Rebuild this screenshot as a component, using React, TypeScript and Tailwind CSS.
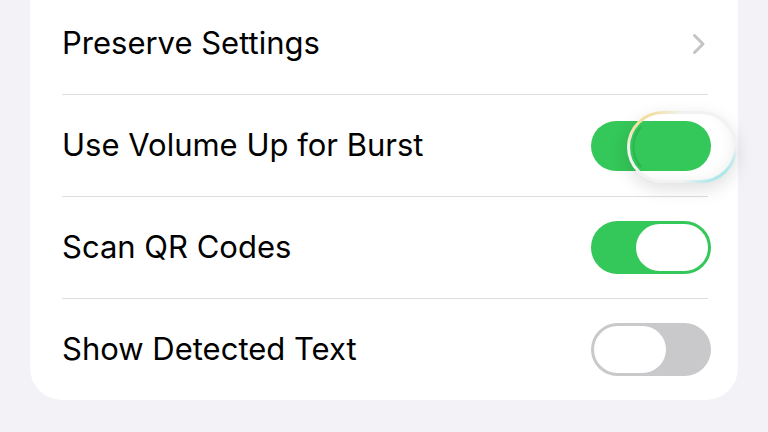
import React from 'react';

function Toggle({ on }: { on: boolean }) {
  return (
    <div
      className={`relative h-[53px] w-[120px] rounded-full ${on ? 'bg-[#34c759]' : 'bg-[#c9c9cc]'}`}
    >
      <div
        className={`absolute top-[3px] h-[47px] w-[72px] rounded-full bg-white ${on ? 'right-[3px]' : 'left-[3px]'}`}
      />
    </div>
  );
}

function GlassToggle() {
  return (
    <div className="relative h-[50px] w-[120px]">
      <div className="absolute inset-0 rounded-full bg-[#34c759]" />
      {/* glass knob mid-drag */}
      <div className="absolute left-[36px] top-[-10px] h-[72px] w-[110px] rounded-full shadow-[0_6px_18px_rgba(0,0,0,0.13),inset_-6px_-4px_12px_rgba(0,0,0,0.05)]">
        <svg className="absolute inset-0" width="110" height="72" viewBox="0 0 110 72">
          <defs>
            <linearGradient id="rim" x1="0" y1="0" x2="1" y2="1">
              <stop offset="0" stopColor="#f0cf5a" />
              <stop offset="0.25" stopColor="#f2f2f2" />
              <stop offset="0.75" stopColor="#f2f2f2" />
              <stop offset="1" stopColor="#6fdfe4" />
            </linearGradient>
          </defs>
          <rect x="1.5" y="1.5" width="107" height="69" rx="34.5" fill="none" stroke="url(#rim)" strokeWidth="3" />
          <path d="M14 16 A 30 30 0 0 0 14 56" fill="none" stroke="#2aa84a" strokeWidth="2" strokeOpacity="0.6" />
        </svg>
      </div>
    </div>
  );
}

function Row({ label, children, last }: { label: string; children: React.ReactNode; last?: boolean }) {
  return (
    <div>
      <div className="flex h-[101px] items-center justify-between pl-[32px] pr-[27px]">
        <span className="text-[31px] text-black">{label}</span>
        {children}
      </div>
      {!last && <div className="ml-[32px] mr-[30px] h-px bg-[#dedee2]" />}
    </div>
  );
}

export default function App() {
  return (
    <div
      className="h-[432px] w-[768px] overflow-hidden bg-[#f2f2f7]"
      style={{ fontFamily: 'Inter, "Liberation Sans", sans-serif' }}
    >
      <div className="mx-[30px] -mt-[7px] rounded-b-[32px] bg-white">
        <Row label="Preserve Settings">
          <svg width="14" height="22" viewBox="0 0 14 22" className="mr-[5px]">
            <path d="M2.5 2.5 L11 11 L2.5 19.5" fill="none" stroke="#c4c4c7" strokeWidth="3" strokeLinecap="round" strokeLinejoin="round" />
          </svg>
        </Row>
        <Row label="Use Volume Up for Burst">
          <GlassToggle />
        </Row>
        <Row label="Scan QR Codes">
          <Toggle on />
        </Row>
        <Row label="Show Detected Text" last>
          <Toggle on={false} />
        </Row>
      </div>
    </div>
  );
}
